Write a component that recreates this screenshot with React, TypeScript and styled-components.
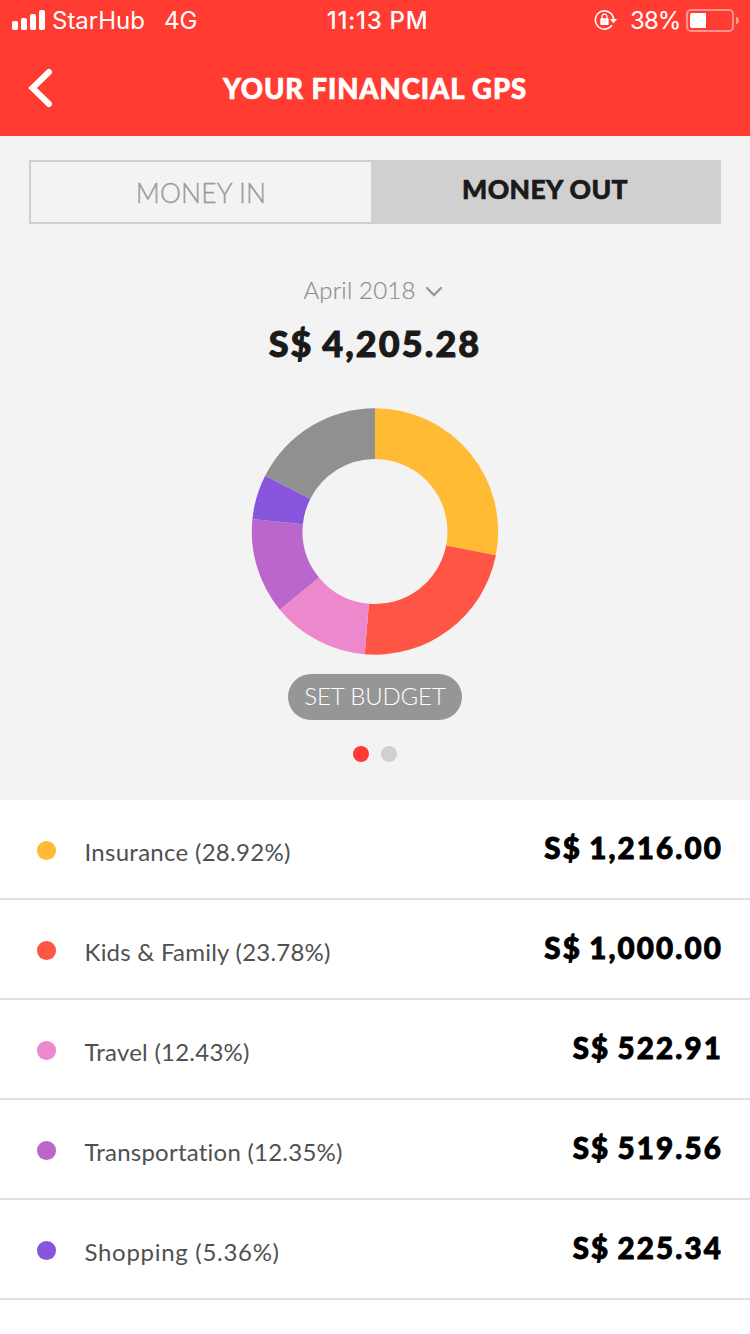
import React from "react";
import styled, { createGlobalStyle } from "styled-components";

const GlobalStyle = createGlobalStyle`
  *, *::before, *::after { box-sizing: border-box; }
  body { margin: 0; background: #fff; }
  button { border: 0; padding: 0; margin: 0; background: none; font: inherit; color: inherit; }
`;

const Screen = styled.div`
  width: 750px;
  height: 1334px;
  overflow: hidden;
  background: #fff;
  font-family: Lato, "Liberation Sans", sans-serif;
  white-space: nowrap;
`;

const Header = styled.header`
  height: 136px;
  background: #ff3b32;
  color: #fff;
`;

const StatusBar = styled.div`
  height: 40px;
  display: grid;
  grid-template-columns: 1fr auto 1fr;
  font: 400 24px/42px Inter, "Liberation Sans", sans-serif;
`;

const StatusLeft = styled.div`
  display: flex;
  padding-left: 12px;
  svg { margin: 10px 7px 0 0; flex: none; }
`;

const Carrier = styled.span`
  width: 112px;
`;

const Network = styled.span``;

const Clock = styled.div`
  font-weight: 500;
  letter-spacing: 0.7px;
  padding-left: 5px;
`;

const StatusRight = styled.div`
  display: flex;
  justify-content: flex-end;
`;

const BatteryLevel = styled.span`
  letter-spacing: -0.9px;
`;

const LockIcon = styled.svg`
  margin: 9px 12px 0 0;
`;

const BatteryIcon = styled.svg`
  margin: 9px 11px 0 5.5px;
`;

const TitleBar = styled.div`
  height: 96px;
  display: grid;
  grid-template-columns: 100px 1fr 100px;
`;

const BackButton = styled.button`
  display: flex;
  padding: 28px 0 0 27px;
`;

const Title = styled.h1`
  margin: 0;
  text-align: center;
  font-size: 27.5px;
  font-weight: 900;
  line-height: 97px;
  letter-spacing: 0.9px;
  -webkit-text-stroke: 0.6px currentColor;
`;

const Summary = styled.section`
  height: 664px;
  background: #f3f3f3;
  display: flex;
  flex-direction: column;
  align-items: center;
  padding-top: 24px;
`;

const Tabs = styled.div`
  display: flex;
  width: 692px;
  height: 64px;
  border: 2px solid #d0d0d0;
`;

const Tab = styled.button<{ $active?: boolean }>`
  flex: ${(p) => (p.$active ? "0 0 348px" : "1")};
  height: 60px;
  padding-bottom: ${(p) => (p.$active ? 6 : 0)}px;
  background: ${(p) => (p.$active ? "#d0d0d0" : "transparent")};
  color: ${(p) => (p.$active ? "#1a1a1a" : "#999")};
  font-size: 26.5px;
  font-weight: ${(p) => (p.$active ? 900 : 300)};
  line-height: ${(p) => (p.$active ? 54 : 62)}px;
  letter-spacing: ${(p) => (p.$active ? 0.4 : 0.15)}px;
  -webkit-text-stroke: ${(p) => (p.$active ? 0.6 : 0.3)}px currentColor;
  display: block;
`;

const MonthPicker = styled.button`
  display: flex;
  align-items: flex-start;
  margin: 50px 4px 0 0;
  height: 32px;
  color: #8e8e8e;
  font-size: 24px;
  font-weight: 300;
  line-height: 32px;
  letter-spacing: 0.2px;
  -webkit-text-stroke: 0.2px currentColor;
  svg { margin: 12px 0 0 9px; }
`;

const Total = styled.div`
  margin-top: 12px;
  height: 50px;
  color: #1a1a1a;
  font-size: 36px;
  font-weight: 900;
  line-height: 50px;
  letter-spacing: 2.1px;
  word-spacing: -2px;
  -webkit-text-stroke: 1px currentColor;
`;

const Donut = styled.svg`
  display: block;
  margin-top: 40px;
`;

const BudgetButton = styled.button`
  width: 174px;
  height: 46px;
  padding-bottom: 2px;
  margin-top: 18px;
  border-radius: 23px;
  background: #969696;
  color: #fff;
  font-size: 24px;
  font-weight: 300;
  line-height: 44px;
  letter-spacing: -0.15px;
`;

const Pager = styled.div`
  display: flex;
  gap: 12px;
  margin-top: 26px;
`;

const PageDot = styled.span<{ $active?: boolean }>`
  width: 16px;
  height: 16px;
  border-radius: 50%;
  background: ${(p) => (p.$active ? "#ff3b32" : "#d0d0d0")};
`;

const List = styled.ul`
  list-style: none;
  margin: 0;
  padding: 0;
`;

const Row = styled.li`
  display: flex;
  height: 100px;
  padding: 0 27px 0 37px;
  border-bottom: 2px solid #e0e0e0;
`;

const Swatch = styled.span<{ $color: string }>`
  flex: none;
  width: 18.5px;
  height: 18.5px;
  margin: 41px 29px 0 0;
  border-radius: 50%;
  background: ${(p) => p.$color};
`;

const Label = styled.span<{ $tracking: number }>`
  flex: 1;
  color: #505050;
  font-size: 24px;
  font-weight: 400;
  line-height: 103px;
  letter-spacing: ${(p) => p.$tracking}px;
`;

const Amount = styled.span`
  color: #000;
  font-size: 29.5px;
  font-weight: 900;
  line-height: 96px;
  letter-spacing: 2.15px;
  word-spacing: -2px;
  -webkit-text-stroke: 0.9px currentColor;
`;

const slices = [
  { color: "#ffbb33", from: 0, to: 101.15 },
  { color: "#ff5544", from: 101.15, to: 184.8 },
  { color: "#ee88cc", from: 184.8, to: 230.6 },
  { color: "#bb66cc", from: 230.6, to: 275.8 },
  { color: "#8855dd", from: 275.8, to: 296.9 },
  { color: "#909090", from: 296.9, to: 360 },
];

const categories = [
  { name: "Insurance", share: "28.92%", amount: "1,216.00", color: "#ffbb33", tracking: 0.28 },
  { name: "Kids & Family", share: "23.78%", amount: "1,000.00", color: "#ff5544", tracking: 0.23 },
  { name: "Travel", share: "12.43%", amount: "522.91", color: "#ee88cc", tracking: 0.23 },
  { name: "Transportation", share: "12.35%", amount: "519.56", color: "#bb66cc", tracking: 0.23 },
  { name: "Shopping", share: "5.36%", amount: "225.34", color: "#8855dd", tracking: 0.7 },
];

const slicePath = (from: number, to: number) => {
  const at = (deg: number, r: number) => {
    const a = (deg * Math.PI) / 180;
    return `${(124 + r * Math.sin(a)).toFixed(2)} ${(123.5 - r * Math.cos(a)).toFixed(2)}`;
  };
  const outer = 123.2;
  const inner = 72.5;
  return `M${at(from, outer)}A${outer} ${outer} 0 0 1 ${at(to, outer)}L${at(to, inner)}A${inner} ${inner} 0 0 0 ${at(from, inner)}Z`;
};

export default function App() {
  return (
    <Screen>
      <GlobalStyle />
      <Header>
        <StatusBar>
          <StatusLeft>
            <svg width="33" height="20" viewBox="0 0 33 20" fill="#fff">
              <rect x="0" y="11" width="6" height="9" rx="1.7" />
              <rect x="9" y="8" width="6" height="12" rx="1.7" />
              <rect x="18" y="4" width="6" height="16" rx="1.7" />
              <rect x="27" y="0" width="6" height="20" rx="1.7" />
            </svg>
            <Carrier>StarHub</Carrier>
            <Network>4G</Network>
          </StatusLeft>
          <Clock>11:13 PM</Clock>
          <StatusRight>
            <LockIcon width="24" height="22" viewBox="0 0 24 22" fill="none">
              <path d="M17.900 16.300A9.100 9.100 0 1 1 19.600 11" stroke="#fff" strokeWidth="1.6" />
              <path d="M15.900 10h7.200L19.500 14.200z" fill="#fff" />
              <rect x="6.300" y="9.200" width="8.400" height="6.800" rx="0.8" fill="#fff" />
              <path d="M8 9.500V7.600a2.500 2.500 0 0 1 5 0V9.500" stroke="#fff" strokeWidth="1.2" />
            </LockIcon>
            <BatteryLevel>38%</BatteryLevel>
            <BatteryIcon width="53" height="23" viewBox="0 0 53 23" fill="none">
              <rect x="1" y="1" width="46" height="21" rx="4" stroke="#fff" strokeOpacity="0.45" strokeWidth="2" />
              <path d="M6 4h14v15H6a2 2 0 0 1-2-2V6a2 2 0 0 1 2-2z" fill="#fff" />
              <path d="M50 7.500q3 1.500 3 4t-3 4z" fill="#fff" fillOpacity="0.5" />
            </BatteryIcon>
          </StatusRight>
        </StatusBar>
        <TitleBar>
          <BackButton aria-label="Back">
            <svg width="26" height="40" viewBox="0 0 26 40" fill="none">
              <path d="M22 4L5.500 20l16.500 16" stroke="#fff" strokeWidth="6" strokeLinecap="round" />
            </svg>
          </BackButton>
          <Title>YOUR FINANCIAL GPS</Title>
        </TitleBar>
      </Header>

      <Summary>
        <Tabs>
          <Tab>MONEY IN</Tab>
          <Tab $active>MONEY OUT</Tab>
        </Tabs>
        <MonthPicker>
          April 2018
          <svg width="18" height="12" viewBox="0 0 18 12" fill="none">
            <path d="M2 2l7 7 7-7" stroke="#999" strokeWidth="2.4" strokeLinecap="round" />
          </svg>
        </MonthPicker>
        <Total>S$ 4,205.28</Total>
        <Donut width="248" height="248" viewBox="0 0 248 248">
          {slices.map((s) => (
            <path key={s.color} d={slicePath(s.from, s.to)} fill={s.color} />
          ))}
        </Donut>
        <BudgetButton>SET BUDGET</BudgetButton>
        <Pager>
          <PageDot $active />
          <PageDot />
        </Pager>
      </Summary>

      <List>
        {categories.map((c) => (
          <Row key={c.name}>
            <Swatch $color={c.color} />
            <Label $tracking={c.tracking}>
              {c.name} ({c.share})
            </Label>
            <Amount>S$ {c.amount}</Amount>
          </Row>
        ))}
      </List>
    </Screen>
  );
}
